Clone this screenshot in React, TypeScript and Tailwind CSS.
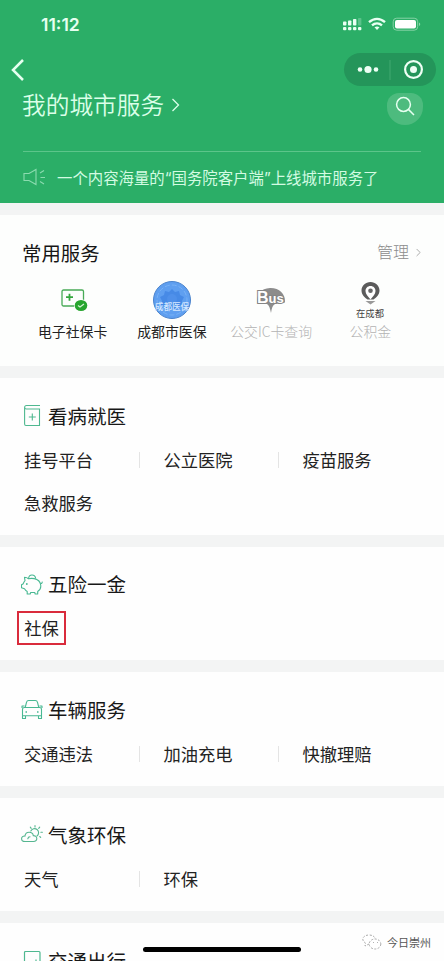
import { ReactNode } from 'react'
import { ChevronRight } from 'lucide-react'

type Service = {
  name: string
  disabled?: boolean
  icon: ReactNode
}

type Category = {
  title: string
  icon: ReactNode
  items: string[]
  highlight?: string
}

const CardIcon = () => (
  <svg width="30" height="26" viewBox="0 0 30 26" fill="none">
    <rect x="4" y="3" width="21.500" height="16" rx="1.500" stroke="#48aa57" strokeWidth="1.300" />
    <path d="M8 10.200h7M11.500 6.700v7" stroke="#35a63e" strokeWidth="1.800" />
    <ellipse cx="23" cy="18.500" rx="7" ry="6.200" fill="#fff" />
    <ellipse cx="23" cy="18.500" rx="6.300" ry="5.500" fill="#27a52f" />
    <path d="M20 18.500l2 1.500 4-3" stroke="#d5f3d5" strokeWidth="1.200" />
  </svg>
)

const MedicalBadge = () => (
  <svg width="38" height="38" viewBox="0 0 38 38" fill="none">
    <circle cx="19" cy="19" r="18.500" fill="#5f9ff0" stroke="#4a83cc" />
    <circle cx="19" cy="19" r="15" stroke="#78b2f6" strokeWidth="1" strokeDasharray="5 2" />
    <path
      d="M19 8l3 3 4-1 1 4 4 2-2 4 1 4-4 1-3 4-4-2-4 2-3-4-4-1 1-4-2-4 4-2 1-4 4 1z"
      fill="#478ae6"
    />
    <circle cx="19" cy="18" r="5" fill="#4f90ea" />
    <text x="19" y="29" textAnchor="middle" fontSize="8.600" fontWeight="500" fill="#d5e8ff">成都医保</text>
  </svg>
)

const BusIcon = () => (
  <svg width="32" height="28" viewBox="0 0 32 28" fill="none">
    <path d="M2 17C1.500 8 6 2.500 15 2c9-.3 15.500 5.500 15 14.500L20 18c-2.300 1-3.300 4-4 9-1-5-2-8-4-9z" fill="#8c8c8c" />
    <g fontFamily="Liberation Sans" fontWeight="700" fill="#fff" stroke="#858585" strokeWidth="2" paintOrder="stroke">
      <text x="2" y="16.500" fontSize="16">B</text>
      <text x="13.500" y="16.500" fontSize="13">us</text>
    </g>
  </svg>
)

const FundIcon = () => (
  <svg width="34" height="38" viewBox="0 0 34 38" fill="none">
    <path d="M17.500 1c-5 0-9 3.800-9 8.500 0 4.500 3.500 7 6 9h6c2.500-2 6-4.500 6-9C26.500 4.800 22.500 1 17.500 1z" fill="#5b5b5b" />
    <path d="M17.500 5c-3 0-5 2.200-5 5 0 3 2.500 5.500 5 8.500 2.500-3 5-5.500 5-8.500 0-2.800-2-5-5-5z" fill="#fff" />
    <circle cx="17.500" cy="9.700" r="2.300" fill="#666" />
    <path d="M12.500 20h10l-5 3.500z" fill="#999" />
    <text x="17" y="35.500" textAnchor="middle" fontSize="9.300" fill="#444">在成都</text>
  </svg>
)

const BookIcon = () => (
  <svg width="22" height="24" viewBox="0 0 22 24" fill="none" stroke="#4fb890" strokeWidth="1.100">
    <path d="M19 1.500H5.500C3 1.500 3 5 5.500 5H18.500V21.500H5C4.200 21.500 3.600 21 3.600 20V3.500" />
    <path d="M11.300 9.500v7M7.800 13h7" />
  </svg>
)

const PiggyIcon = () => (
  <svg width="22" height="24" viewBox="0 0 22 24" fill="none" stroke="#48b892" strokeWidth="1.100" strokeLinejoin="round">
    <path d="M7.500 6.800C7.700 4.500 9.200 3 11 3s3.400 1.400 3.700 3.600" />
    <path d="M7.500 6.800C6.200 5.800 5 5.300 3.500 5.300l.5 3.400C3 9.700 2.500 11 2 12l-1.500.8v3l3 1c.8 1.300 1.700 2.100 2.700 2.700V22h3l.5-1.500h4l.5 1.500h2.500v-2.500c2.400-1.600 3.400-3.800 3-6.500-.5-3.500-3-5.700-6.500-6.400-2-.3-4-.3-5.700.2z" />
    <path d="M19.500 11.500c1.200.3 1.900-.5 1.700-1.800" />
    <circle cx="5.800" cy="12" r=".4" />
  </svg>
)

const CarIcon = () => (
  <svg width="22" height="24" viewBox="0 0 22 24" fill="none" stroke="#48b892" strokeWidth="1.100" strokeLinejoin="round">
    <path d="M4.200 9.500L5.500 4.300C5.800 3 6.500 2.500 7.700 2.500h6.600c1.200 0 1.900.5 2.200 1.800l1.300 5.200" />
    <path d="M3.500 8H1v2M18.500 8H21v2M3.500 9.500h15c1.200 0 2 .8 2 2v9h-3v-2.700h-13v2.700h-3v-9c0-1.200.8-2 2-2zM1.500 17.800h19" />
    <path d="M4.500 14h1.500M16 14h1.500" strokeWidth="1.500" />
  </svg>
)

const WeatherIcon = () => (
  <svg width="22" height="24" viewBox="0 0 22 24" fill="none" stroke="#55b690" strokeWidth="1.100" strokeLinecap="round">
    <path d="M4 18.500C1.700 18.500.6 17.300.6 15.700c0-1.700 1.400-2.800 3.300-2.600.4-2.400 2-3.800 4.200-3.800s3.900 1.300 4.200 3.300c2-.1 3.500 1.100 3.500 3s-1.400 2.900-3.300 2.900z" />
    <path d="M9.800 8A4.100 4.100 0 1 1 16 13M14 2.500v1.500M9.300 4.200l.9 1.200M18.700 4.200l-1 1.200M19.900 9.300h1.500M18.700 13.500l1 .9" />
    <path d="M9 13.800c-1.500 0-2 .7-2.200 2" />
  </svg>
)

const TransitIcon = () => (
  <svg width="22" height="24" viewBox="0 0 22 24" fill="none" stroke="#4fb890" strokeWidth="1.200">
    <rect x="3.500" y="2.500" width="15.500" height="17" rx="1" />
    <path d="M12.500 12.500h2.500v-2" />
  </svg>
)

const services: Service[] = [
  { name: '电子社保卡', icon: <CardIcon /> },
  { name: '成都市医保', icon: <MedicalBadge /> },
  { name: '公交IC卡查询', icon: <BusIcon />, disabled: true },
  { name: '公积金', icon: <FundIcon />, disabled: true },
]

const categories: Category[] = [
  { title: '看病就医', icon: <BookIcon />, items: ['挂号平台', '公立医院', '疫苗服务', '急救服务'] },
  { title: '五险一金', icon: <PiggyIcon />, items: ['社保'], highlight: '社保' },
  { title: '车辆服务', icon: <CarIcon />, items: ['交通违法', '加油充电', '快撤理赔'] },
  { title: '气象环保', icon: <WeatherIcon />, items: ['天气', '环保'] },
  { title: '交通出行', icon: <TransitIcon />, items: [] },
]

const StatusBar = () => (
  <div className="flex h-12 items-center justify-between pl-[41px] pr-[22px]">
    <span className="mt-0.5 font-['Inter'] text-[17.500px] font-semibold text-[#e6fff0]">11:12</span>
    <svg width="80" height="16" viewBox="0 0 80 16" fill="#e9fff2">
      <rect x="1" y="5.500" width="3.400" height="4" rx=".8" />
      <rect x="6" y="4.500" width="3.400" height="5" rx=".8" />
      <rect x="11" y="3" width="3.400" height="6.500" rx=".8" />
      <rect x="16" y="2" width="3.400" height="7.500" rx=".8" opacity=".25" />
      <rect x="1" y="11" width="3.400" height="3.300" rx="1" />
      <rect x="6" y="11" width="3.400" height="3.300" rx="1" />
      <rect x="11" y="11" width="3.400" height="3.300" rx="1" />
      <rect x="16" y="11" width="3.400" height="3.300" rx="1" />
      <g fill="none" stroke="#e9fff2" strokeWidth="2.400">
        <path d="M27 6.200c5-4.300 11-4.300 16 0" />
        <path d="M30 9.300c3-2.600 7-2.600 10 0" />
      </g>
      <path d="M32.500 11.200c1.600-1.100 3.400-1.100 5 0L35 14z" />
      <rect x="51.200" y="2.200" width="24.500" height="12" rx="3.500" fill="none" stroke="#86d3a6" strokeWidth="1" />
      <rect x="53" y="4" width="21" height="8.500" rx="2" fill="#fff" />
      <path d="M77 6.500c1.700.6 1.700 3 0 3.600z" opacity=".5" />
    </svg>
  </div>
)

const Header = () => (
  <header className="h-[203px] bg-[#2bae67]">
    <StatusBar />
    <div className="flex h-[42px] items-center justify-between pl-[10px] pr-2">
      <svg width="16" height="24" viewBox="0 0 16 24" fill="none" stroke="#e6fff0" strokeWidth="2.500">
        <path d="M13 3L3 13l10 10" />
      </svg>
      <div className="flex h-[33px] w-[92px] items-center rounded-full bg-[#24955a]">
        <svg width="92" height="33" viewBox="0 0 92 33" fill="#eefff5">
          <circle cx="16" cy="16.500" r="2.300" />
          <circle cx="24" cy="16.500" r="3.600" />
          <circle cx="32" cy="16.500" r="2.300" />
          <path d="M46 7v20" stroke="#40a971" />
          <circle cx="69.500" cy="16.500" r="8.400" fill="none" stroke="#eefff5" strokeWidth="2.200" />
          <circle cx="69.500" cy="16.500" r="3.500" />
        </svg>
      </div>
    </div>
    <div className="flex h-[61px] items-start justify-between pl-[22px] pr-[21px]">
      <div className="flex h-7 items-center text-[#dbffe9]">
        <h1 className="text-[23.700px] font-[350] leading-7">我的城市服务</h1>
        <svg className="ml-[7px] mt-0.5" width="10" height="16" viewBox="0 0 10 16" fill="none" stroke="currentColor" strokeWidth="1.300">
          <path d="M1.500 2l6 6-6 6" />
        </svg>
      </div>
      <div className="mt-[3px] flex h-8 w-9 items-center justify-center rounded-t-[12px] rounded-b-[18px] bg-[#4dbb7e]">
        <svg className="-mt-1.5" width="22" height="22" viewBox="0 0 22 22" fill="none" stroke="#e6fff0" strokeWidth="1.500">
          <circle cx="9.500" cy="9.500" r="6.900" />
          <path d="M14.400 14.400l5.600 5.600" />
        </svg>
      </div>
    </div>
    <div className="mx-[23px] flex h-[52px] items-center border-t border-[#5cc58a] text-[#d3fbe2]">
      <svg width="24" height="20" viewBox="0 0 24 20" fill="none" stroke="#8bdbaf" strokeWidth="1.100">
        <path d="M1 5.500h5l7-4v15l-7-4H1zM17 5l4-2.500M17.500 9.500h4.500M17 13.500l4 2.500" />
      </svg>
      <p className="ml-[10px] whitespace-nowrap text-[15.400px] leading-6">
        一个内容海量的<span className="font-['Inter']">“</span>国务院客户端<span className="font-['Inter']">”</span>上线城市服务了
      </p>
    </div>
  </header>
)

const CommonServices = () => (
  <section className="mt-3 h-[151px] bg-[#fdfefd] pt-6">
    <div className="flex h-7 items-center justify-between pl-[22px] pr-[19px]">
      <h2 className="text-[19.400px] text-[#161616]">常用服务</h2>
      <div className="-mt-1 flex items-center text-[16px] font-light text-[#8c8c8c]">
        管理
        <ChevronRight className="ml-[3px] mt-0.5" size={13} strokeWidth={1.300} />
      </div>
    </div>
    <div className="mt-3 grid grid-cols-4 pl-[23px] pr-6">
      {services.map((s) => (
        <div key={s.name} className="flex flex-col items-center">
          <div className="flex h-[42px] items-center justify-center">{s.icon}</div>
          <span
            className={
              s.disabled
                ? 'whitespace-nowrap text-[13.900px] font-light leading-5 text-[#b3b3b3]'
                : 'whitespace-nowrap text-[13.900px] leading-5 text-[#222]'
            }
          >
            {s.name}
          </span>
        </div>
      ))}
    </div>
  </section>
)

const CategorySection = ({ title, icon, items, highlight }: Category) => (
  <section className="mt-3 bg-[#fefefe] pb-[10.5px] pt-[23px]">
    <div className="flex h-[29px] items-center pl-[21px]">
      {icon}
      <h2 className="ml-[5px] text-[19.500px] text-[#181818]">{title}</h2>
    </div>
    <div className="mt-2 grid grid-cols-[139.5px_139px_139px]">
      {items.map((item, i) => (
        <div key={item} className="flex h-[43px] items-center">
          <span
            className={
              item === highlight
                ? 'ml-[17px] flex h-[34px] w-[49px] items-center justify-center whitespace-nowrap border-2 border-[#d92b3c] text-[17.300px] text-[#222]'
                : 'pl-6 whitespace-nowrap text-[17.300px] text-[#222]'
            }
          >
            {item}
          </span>
          {i < 2 && i < items.length - 1 && <i className="ml-auto h-4 w-px bg-[#e4e4e4]" />}
        </div>
      ))}
    </div>
  </section>
)

export default function App() {
  return (
    <div className="relative h-[961px] w-[444px] overflow-hidden bg-[#f3f4f4] font-['Noto_Sans_CJK_SC',sans-serif]">
      <Header />
      <CommonServices />
      {categories.map((c) => (
        <CategorySection key={c.title} {...c} />
      ))}

      <div className="absolute bottom-[9px] left-[143px] h-[5px] w-[158px] rounded-full bg-black" />
      <div className="absolute bottom-[9px] left-[361px] flex items-center text-[11px] leading-5 text-[#555]">
        <svg className="mr-[5px]" width="21" height="18" viewBox="0 0 21 18" fill="#fff" stroke="#aaa" strokeWidth="1" strokeDasharray="2 1.500">
          <path d="M8 11l-4 2 .5-3C-.5 7 2 2 8 2c4 0 6 2 6 4" />
          <ellipse cx="14" cy="11" rx="5.800" ry="5" />
          <path d="M12 9.500h.5M16 9.500h.5" stroke="#666" />
        </svg>
        今日崇州
      </div>
    </div>
  )
}
